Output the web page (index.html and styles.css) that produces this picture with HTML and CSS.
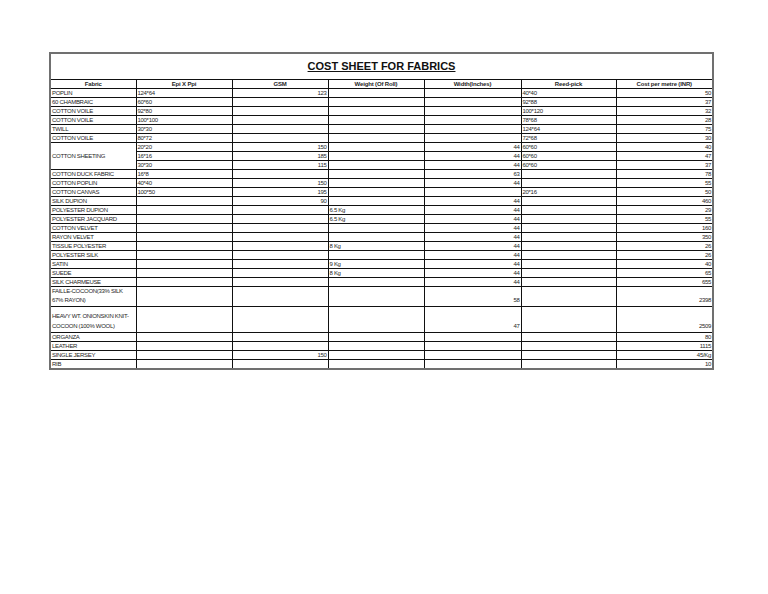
FILE: index.html
```html
<!DOCTYPE html>
<html>
<head>
<meta charset="utf-8">
<link rel="stylesheet" href="styles.css">
</head>
<body>
<div class="page">
  <div class="sheet">
    <table class="grid">
      <colgroup>
        <col class="c-fabric">
        <col class="c-std">
        <col class="c-std">
        <col class="c-std">
        <col class="c-wide">
        <col class="c-reed">
        <col class="c-std">
      </colgroup>
      <tr class="title-row"><td colspan="7" class="title"><span>COST SHEET FOR FABRICS</span></td></tr>
      <tr class="head"><th>Fabric</th><th>Epi X Ppi</th><th>GSM</th><th>Weight (Of Roll)</th><th>Width(Inches)</th><th>Reed-pick</th><th>Cost per metre (INR)</th></tr>
      <tr><td>POPLIN</td><td>124*64</td><td class="n">123</td><td></td><td class="n"></td><td>40*40</td><td class="n">50</td></tr>
      <tr><td>60 CHAMBRAIC</td><td>60*60</td><td class="n"></td><td></td><td class="n"></td><td>92*88</td><td class="n">37</td></tr>
      <tr><td>COTTON VOILE</td><td>92*80</td><td class="n"></td><td></td><td class="n"></td><td>100*120</td><td class="n">32</td></tr>
      <tr><td>COTTON VOILE</td><td>100*100</td><td class="n"></td><td></td><td class="n"></td><td>78*68</td><td class="n">28</td></tr>
      <tr><td>TWILL</td><td>30*30</td><td class="n"></td><td></td><td class="n"></td><td>124*64</td><td class="n">75</td></tr>
      <tr><td>COTTON VOILE</td><td>80*72</td><td class="n"></td><td></td><td class="n"></td><td>72*68</td><td class="n">30</td></tr>
      <tr><td rowspan="3" class="mid">COTTON SHEETING</td><td>20*20</td><td class="n">150</td><td></td><td class="n">44</td><td>60*60</td><td class="n">40</td></tr>
      <tr><td>16*16</td><td class="n">185</td><td></td><td class="n">44</td><td>60*60</td><td class="n">47</td></tr>
      <tr><td>30*30</td><td class="n">115</td><td></td><td class="n">44</td><td>60*60</td><td class="n">37</td></tr>
      <tr><td>COTTON DUCK FABRIC</td><td>16*8</td><td class="n"></td><td></td><td class="n">63</td><td></td><td class="n">78</td></tr>
      <tr><td>COTTON POPLIN</td><td>40*40</td><td class="n">150</td><td></td><td class="n">44</td><td></td><td class="n">55</td></tr>
      <tr><td>COTTON CANVAS</td><td>100*50</td><td class="n">195</td><td></td><td class="n"></td><td>20*16</td><td class="n">50</td></tr>
      <tr><td>SILK DUPION</td><td></td><td class="n">90</td><td></td><td class="n">44</td><td></td><td class="n">460</td></tr>
      <tr><td>POLYESTER DUPION</td><td></td><td class="n"></td><td>6.5 Kg</td><td class="n">44</td><td></td><td class="n">29</td></tr>
      <tr><td>POLYESTER JACQUARD</td><td></td><td class="n"></td><td>6.5 Kg</td><td class="n">44</td><td></td><td class="n">55</td></tr>
      <tr><td>COTTON VELVET</td><td></td><td class="n"></td><td></td><td class="n">44</td><td></td><td class="n">160</td></tr>
      <tr><td>RAYON VELVET</td><td></td><td class="n"></td><td></td><td class="n">44</td><td></td><td class="n">350</td></tr>
      <tr><td>TISSUE POLYESTER</td><td></td><td class="n"></td><td>8 Kg</td><td class="n">44</td><td></td><td class="n">26</td></tr>
      <tr><td>POLYESTER SILK</td><td></td><td class="n"></td><td></td><td class="n">44</td><td></td><td class="n">26</td></tr>
      <tr><td>SATIN</td><td></td><td class="n"></td><td>9 Kg</td><td class="n">44</td><td></td><td class="n">40</td></tr>
      <tr><td>SUEDE</td><td></td><td class="n"></td><td>8 Kg</td><td class="n">44</td><td></td><td class="n">65</td></tr>
      <tr><td>SILK CHARMEUSE</td><td></td><td class="n"></td><td></td><td class="n">44</td><td></td><td class="n">655</td></tr>
      <tr class="tall1"><td>FAILLE-COCOON(33% SILK<br>67% RAYON)</td><td></td><td class="n"></td><td></td><td class="n">58</td><td></td><td class="n">2398</td></tr>
      <tr class="tall2"><td>HEAVY WT. ONIONSKIN KNIT-<br>COCOON (100% WOOL)</td><td></td><td class="n"></td><td></td><td class="n">47</td><td></td><td class="n">2509</td></tr>
      <tr><td>ORGANZA</td><td></td><td class="n"></td><td></td><td class="n"></td><td></td><td class="n">80</td></tr>
      <tr><td>LEATHER</td><td></td><td class="n"></td><td></td><td class="n"></td><td></td><td class="n">1115</td></tr>
      <tr><td>SINGLE JERSEY</td><td></td><td class="n">150</td><td></td><td class="n"></td><td></td><td class="n">45/Kg</td></tr>
      <tr><td>RIB</td><td></td><td class="n"></td><td></td><td class="n"></td><td></td><td class="n">10</td></tr>
    </table>
  </div>
</div>
</body>
</html>
```

FILE: styles.css
```css
html, body {
  margin: 0;
  padding: 0;
  background: #ffffff;
}
.page {
  padding: 52px 0 0 49px;
}
.sheet {
  display: inline-block;
  border: 2px solid #707070;
  line-height: 0;
}
.grid {
  border-collapse: collapse;
  border-style: hidden;
  table-layout: fixed;
  width: 661px;
  font-family: "Liberation Sans", Arial, sans-serif;
  font-size: 6px;
  letter-spacing: -0.3px;
  color: #262626;
}
.c-fabric { width: 85px; }
.c-std { width: 96px; }
.c-wide { width: 97px; }
.c-reed { width: 95px; }
.grid td, .grid th {
  border: 1px solid #111111;
  height: 8px;
  padding: 0 1px;
  line-height: 8px;
  vertical-align: bottom;
  text-align: left;
  white-space: nowrap;
  overflow: hidden;
  font-weight: normal;
}
.grid .head th {
  font-weight: bold;
  text-align: center;
  letter-spacing: -0.15px;
}
.grid td.n {
  text-align: right;
}
.grid td.mid {
  vertical-align: middle;
}
.grid .title-row td.title {
  height: 18px;
  padding: 0 0 7px 0;
  text-align: center;
  vertical-align: bottom;
  font-size: 11px;
  letter-spacing: 0;
  line-height: 12px;
  font-weight: bold;
  color: #111111;
}
.title span {
  text-decoration: underline;
  text-underline-offset: 1px;
}
.grid .tall1 td {
  height: 17px;
  line-height: 9px;
  padding-bottom: 1px;
}
.grid .tall2 td {
  height: 24px;
  line-height: 10px;
  padding-bottom: 1px;
}
```
